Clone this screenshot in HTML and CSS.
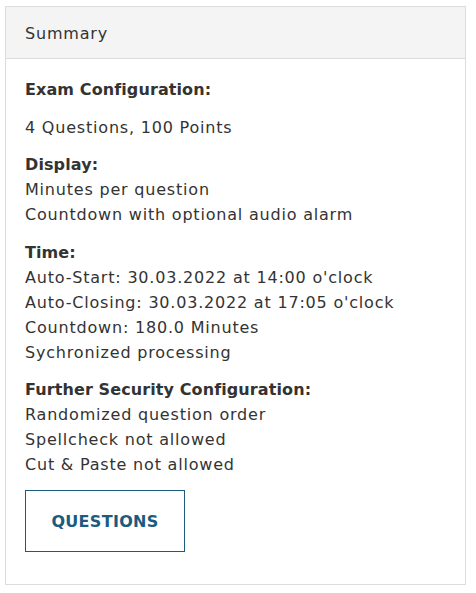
FILE: index.html
```html
<!DOCTYPE html>
<html>
<head>
<meta charset="utf-8">
<link rel="stylesheet" href="styles.css">
</head>
<body>
<div class="card">
  <div class="card-header">Summary</div>
  <div class="card-body">
    <p class="section"><strong>Exam Configuration:</strong></p>
    <p class="section">4 Questions, 100 Points</p>
    <p class="section"><strong>Display:</strong><br>Minutes per question<br>Countdown with optional audio alarm</p>
    <p class="section"><strong>Time:</strong><br>Auto-Start: 30.03.2022 at 14:00 o'clock<br>Auto-Closing: 30.03.2022 at 17:05 o'clock<br>Countdown: 180.0 Minutes<br>Sychronized processing</p>
    <p class="section"><strong>Further Security Configuration:</strong><br>Randomized question order<br>Spellcheck not allowed<br>Cut &amp; Paste not allowed</p>
    <button class="btn" type="button">QUESTIONS</button>
  </div>
</div>
</body>
</html>
```
FILE: styles.css
```css
html, body {
  margin: 0;
  padding: 0;
  background: #fff;
}
body {
  padding: 6px 10px 0 5px;
  font-family: "DejaVu Sans", sans-serif;
  font-size: 16px;
  line-height: 25px;
  letter-spacing: 0.8px;
  color: #333;
}
.card {
  border: 1px solid #dcdcdc;
  box-sizing: border-box;
  width: 461px;
}
.card-header {
  background: #f4f4f4;
  border-bottom: 1px solid #dcdcdc;
  height: 52px;
  box-sizing: border-box;
  padding: 1px 19px 0;
  display: flex;
  align-items: center;
}
.card-body {
  padding: 18px 19px 32px;
}
.section {
  margin: 0 0 12.5px;
}
.section strong {
  font-weight: bold;
  letter-spacing: 0.1px;
}
.btn {
  display: block;
  margin-top: 13px;
  width: 160px;
  height: 62px;
  background: #fff;
  border: 1px solid #1b5b7e;
  color: #1b5b7e;
  font-family: "DejaVu Sans", sans-serif;
  font-weight: bold;
  font-size: 16px;
  letter-spacing: 0.3px;
  padding: 0;
  cursor: pointer;
}
```
